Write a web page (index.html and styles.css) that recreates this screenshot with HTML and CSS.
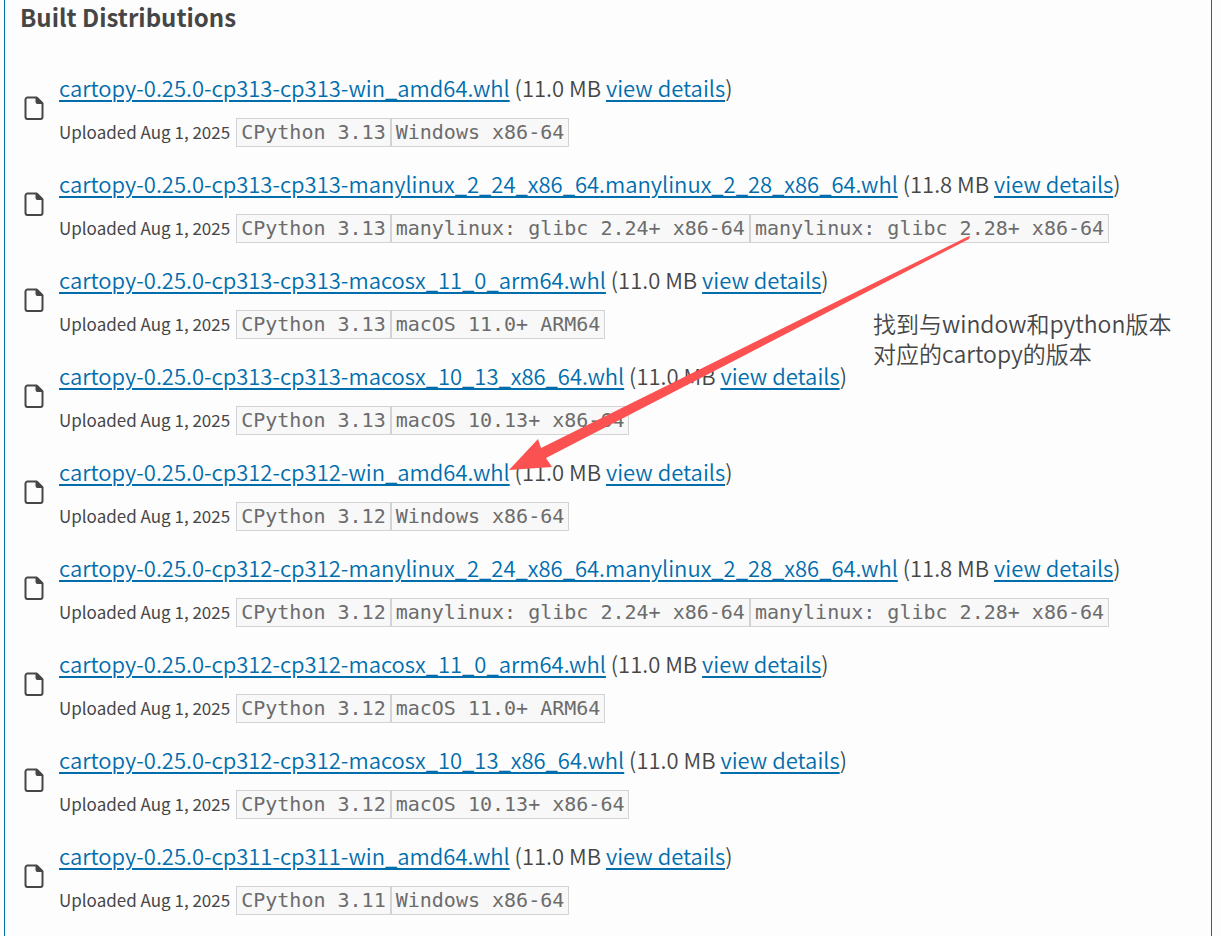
FILE: index.html
```
<!DOCTYPE html>
<html lang="en">
<head>
<meta charset="utf-8">
<title>Built Distributions</title>
<link rel="stylesheet" href="styles.css">
</head>
<body>
<svg class="defs" aria-hidden="true"><symbol id="file" viewBox="0 0 20 25"><path d="M3.500 1.500h9l6 6V21a2 2 0 0 1-2 2h-13a2 2 0 0 1-2-2V3.500a2 2 0 0 1 2-2z" fill="none" stroke="currentColor" stroke-width="2"/><path d="M11.500 1h2L19 6.500V8h-5.500a2 2 0 0 1-2-2z" fill="currentColor"/></symbol></svg>
<main class="panel">
<h1 class="title">Built Distributions</h1>
<ul class="files">
<li class="file"><svg class="icon" aria-hidden="true"><use href="#file"/></svg><div class="info"><p class="name"><a href="#">cartopy-0.25.0-cp313-cp313-win_amd64.whl</a> (11.0 MB <a href="#">view details</a>)</p><p class="meta">Uploaded Aug 1, 2025 <span class="tags"><code>CPython 3.13</code><code>Windows x86-64</code></span></p></div></li>
<li class="file"><svg class="icon" aria-hidden="true"><use href="#file"/></svg><div class="info"><p class="name"><a href="#">cartopy-0.25.0-cp313-cp313-manylinux_2_24_x86_64.manylinux_2_28_x86_64.whl</a> (11.8 MB <a href="#">view details</a>)</p><p class="meta">Uploaded Aug 1, 2025 <span class="tags"><code>CPython 3.13</code><code>manylinux: glibc 2.24+ x86-64</code><code>manylinux: glibc 2.28+ x86-64</code></span></p></div></li>
<li class="file"><svg class="icon" aria-hidden="true"><use href="#file"/></svg><div class="info"><p class="name"><a href="#">cartopy-0.25.0-cp313-cp313-macosx_11_0_arm64.whl</a> (11.0 MB <a href="#">view details</a>)</p><p class="meta">Uploaded Aug 1, 2025 <span class="tags"><code>CPython 3.13</code><code>macOS 11.0+ ARM64</code></span></p></div></li>
<li class="file"><svg class="icon" aria-hidden="true"><use href="#file"/></svg><div class="info"><p class="name"><a href="#">cartopy-0.25.0-cp313-cp313-macosx_10_13_x86_64.whl</a> (11.0 MB <a href="#">view details</a>)</p><p class="meta">Uploaded Aug 1, 2025 <span class="tags"><code>CPython 3.13</code><code>macOS 10.13+ x86-64</code></span></p></div></li>
<li class="file"><svg class="icon" aria-hidden="true"><use href="#file"/></svg><div class="info"><p class="name"><a href="#">cartopy-0.25.0-cp312-cp312-win_amd64.whl</a> (11.0 MB <a href="#">view details</a>)</p><p class="meta">Uploaded Aug 1, 2025 <span class="tags"><code>CPython 3.12</code><code>Windows x86-64</code></span></p></div></li>
<li class="file"><svg class="icon" aria-hidden="true"><use href="#file"/></svg><div class="info"><p class="name"><a href="#">cartopy-0.25.0-cp312-cp312-manylinux_2_24_x86_64.manylinux_2_28_x86_64.whl</a> (11.8 MB <a href="#">view details</a>)</p><p class="meta">Uploaded Aug 1, 2025 <span class="tags"><code>CPython 3.12</code><code>manylinux: glibc 2.24+ x86-64</code><code>manylinux: glibc 2.28+ x86-64</code></span></p></div></li>
<li class="file"><svg class="icon" aria-hidden="true"><use href="#file"/></svg><div class="info"><p class="name"><a href="#">cartopy-0.25.0-cp312-cp312-macosx_11_0_arm64.whl</a> (11.0 MB <a href="#">view details</a>)</p><p class="meta">Uploaded Aug 1, 2025 <span class="tags"><code>CPython 3.12</code><code>macOS 11.0+ ARM64</code></span></p></div></li>
<li class="file"><svg class="icon" aria-hidden="true"><use href="#file"/></svg><div class="info"><p class="name"><a href="#">cartopy-0.25.0-cp312-cp312-macosx_10_13_x86_64.whl</a> (11.0 MB <a href="#">view details</a>)</p><p class="meta">Uploaded Aug 1, 2025 <span class="tags"><code>CPython 3.12</code><code>macOS 10.13+ x86-64</code></span></p></div></li>
<li class="file"><svg class="icon" aria-hidden="true"><use href="#file"/></svg><div class="info"><p class="name"><a href="#">cartopy-0.25.0-cp311-cp311-win_amd64.whl</a> (11.0 MB <a href="#">view details</a>)</p><p class="meta">Uploaded Aug 1, 2025 <span class="tags"><code>CPython 3.11</code><code>Windows x86-64</code></span></p></div></li>
</ul>
</main>
<svg class="arrow" viewBox="0 0 462 236" aria-hidden="true"><path d="M0 234 29 203 32 212 458 1 461 0 460 3 37 222 43 231z" fill="#fb5151"/></svg>
<p class="note" lang="zh-CN">找到与window和python版本<br>对应的cartopy的版本</p>
</body>
</html>
```
FILE: styles.css
```
* { box-sizing: border-box; }
body {
  margin: 0;
  position: relative;
  background: #fdfdfd;
  color: #464646;
  font-family: "Noto Sans CJK SC", "Noto Sans", sans-serif;
}
.defs { position: absolute; width: 0; height: 0; }
.panel {
  margin: 0 9px 0 4px;
  padding: 0 15px 10px;
  min-height: 100vh;
  border: solid #006dad;
  border-width: 0 1px;
}
.title { margin: 0; font-size: 24px; line-height: 34px; font-weight: 700; }
.files { list-style: none; margin: 0; padding: 26px 0 0; }
.file { display: flex; align-items: center; gap: 15px; height: 96px; padding-left: 4px; }
.icon { width: 20px; height: 25px; flex: none; color: #464646; }
.info { white-space: nowrap; }
.name, .meta { margin: 0; }
.name { font-size: 22px; line-height: 48px; font-weight: 350; }
.name a { color: #006dad; text-decoration: underline; text-decoration-thickness: 2px; text-underline-offset: 3px; }
.meta { display: flex; align-items: center; gap: 6px; font-size: 17px; line-height: 42px; }
.tags { display: flex; }
.tags code {
  padding: 0 4px;
  border: 1px solid #d3d3d3;
  background: #f8f8f8;
  color: #6c6c6c;
  font: 20px/27px "DejaVu Sans Mono", monospace;
}
.arrow { position: absolute; left: 509px; top: 236px; width: 462px; height: 236px; }
.note { position: absolute; left: 873px; top: 308px; margin: 0; font-size: 23px; line-height: 30px; font-weight: 350; }
```
